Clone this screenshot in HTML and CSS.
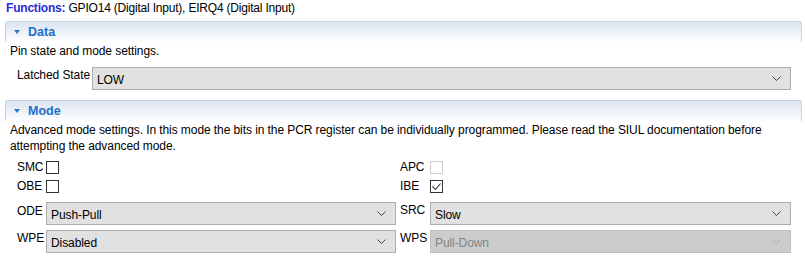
FILE: index.html
```html
<!DOCTYPE html>
<html lang="en">
<head>
  <meta charset="UTF-8">
  <title>Pin Settings</title>
  <link rel="stylesheet" href="styles.css">
</head>
<body>
  <div class="functions"><b>Functions:</b> GPIO14 (Digital Input), EIRQ4 (Digital Input)</div>

  <div class="section">
    <div class="section-head"><span class="twisty"></span>Data</div>
    <div class="section-body">
      <p class="desc">Pin state and mode settings.</p>
      <div class="latched">
        <span class="label">Latched State</span>
        <div class="combo"><span>LOW</span><svg width="9" height="5" viewBox="0 0 9 5"><path d="M0.5 0.5 L4.5 4.5 L8.5 0.5" fill="none" stroke="#444"/></svg></div>
      </div>
    </div>
  </div>

  <div class="section">
    <div class="section-head"><span class="twisty"></span>Mode</div>
    <div class="section-body">
      <p class="desc">Advanced mode settings. In this mode the bits in the PCR register can be individually programmed. Please read the SIUL documentation before<br>attempting the advanced mode.</p>
      <div class="fields">
        <span class="label">SMC</span>
        <div class="check-cell"><span class="check"></span></div>
        <span class="label right">APC</span>
        <div class="check-cell"><span class="check disabled"></span></div>

        <span class="label">OBE</span>
        <div class="check-cell"><span class="check"></span></div>
        <span class="label right">IBE</span>
        <div class="check-cell"><span class="check"><svg width="11" height="11" viewBox="0 0 11 11"><path d="M1.5 5.5 L4.5 8.5 L9.5 2.5" fill="none" stroke="#333" stroke-width="1.1"/></svg></span></div>

        <span class="label top">ODE</span>
        <div class="combo top"><span>Push-Pull</span><svg width="9" height="5" viewBox="0 0 9 5"><path d="M0.5 0.5 L4.5 4.5 L8.5 0.5" fill="none" stroke="#444"/></svg></div>
        <span class="label right top">SRC</span>
        <div class="combo top"><span>Slow</span><svg width="9" height="5" viewBox="0 0 9 5"><path d="M0.5 0.5 L4.5 4.5 L8.5 0.5" fill="none" stroke="#444"/></svg></div>

        <span class="label">WPE</span>
        <div class="combo"><span>Disabled</span><svg width="9" height="5" viewBox="0 0 9 5"><path d="M0.5 0.5 L4.5 4.5 L8.5 0.5" fill="none" stroke="#444"/></svg></div>
        <span class="label right">WPS</span>
        <div class="combo disabled"><span>Pull-Down</span><svg width="9" height="5" viewBox="0 0 9 5"><path d="M0.5 0.5 L4.5 4.5 L8.5 0.5" fill="none" stroke="#aaa"/></svg></div>
      </div>
    </div>
  </div>
</body>
</html>
```
FILE: styles.css
```css
body { margin: 0; background: #fff; color: #000; font: 12px "Liberation Sans", Arial, sans-serif; letter-spacing: -0.08px; }
p { margin: 0; }

.functions { height: 21px; line-height: 16px; padding-left: 6px; letter-spacing: -0.2px; }
.functions b { color: #2a2ad8; }

.section { margin: 0 3px 0 5px; }
.section-head { height: 20px; line-height: 20px; border: 1px solid #c7d3e0; border-bottom: none; border-radius: 3px 3px 0 0;
  background: linear-gradient(#dbe4f1, #fdfeff); color: #2170c8; font-weight: bold; font-size: 12.5px; letter-spacing: 0; }
.twisty { display: inline-block; width: 0; height: 0; margin: 0 8px 2px 8px; vertical-align: middle;
  border-left: 3.5px solid transparent; border-right: 3.5px solid transparent; border-top: 4px solid #2b74c6; }

.section-body { padding: 0 0 0 5px; }
.desc { line-height: 16px; padding-top: 1px; }

.latched { display: flex; align-items: flex-start; margin: 8px 0 10px 7px; }
.latched .label { width: 75px; padding-top: 1px; line-height: 14px; }
.latched .combo { width: 699px; }

.combo { height: 23px; box-sizing: border-box; border: 1px solid #adadad; background: #e1e1e1;
  display: flex; align-items: center; justify-content: space-between; padding: 2px 9px 0 4px; }
.combo svg { margin-top: -2px; }
.combo.disabled { background: #cccccc; border-color: #bfbfbf; color: #838383; }

.fields { display: grid; grid-template-columns: 29px 350px 34px 361px; margin: 4px 0 0 7px; }
.fields .label { line-height: 14px; padding-top: 2px; }
.fields .label.right { padding-left: 4px; }
.fields .top { margin-top: 6px; }
.fields .combo { margin-bottom: 5px; }
.fields .combo + .label { padding-top: 1px; }
.check-cell { height: 19px; display: flex; align-items: center; }
.check { width: 13px; height: 13px; box-sizing: border-box; border: 1px solid #333; background: #fff; display: flex; }
.check.disabled { border-color: #cccccc; }
```
